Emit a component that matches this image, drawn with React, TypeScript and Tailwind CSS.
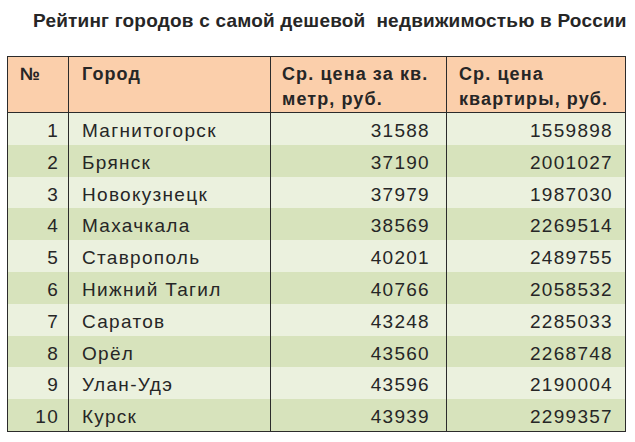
const rows = [
  [1, 'Магнитогорск', '31588', '1559898'],
  [2, 'Брянск', '37190', '2001027'],
  [3, 'Новокузнецк', '37979', '1987030'],
  [4, 'Махачкала', '38569', '2269514'],
  [5, 'Ставрополь', '40201', '2489755'],
  [6, 'Нижний Тагил', '40766', '2058532'],
  [7, 'Саратов', '43248', '2285033'],
  [8, 'Орёл', '43560', '2268748'],
  [9, 'Улан-Удэ', '43596', '2190004'],
  [10, 'Курск', '43939', '2299357'],
];

export default function App() {
  return (
    <div className="w-[635px] h-[442px] bg-white text-[#262626] font-['Liberation_Sans',Arial,sans-serif] overflow-hidden">
      <h1 className="pt-[9px] pl-[33px] text-[19px] leading-[23px] font-bold tracking-[0.2px] whitespace-nowrap">
        Рейтинг городов с самой дешевой&nbsp; недвижимостью в России
      </h1>

      <div className="mt-[24px] ml-[7px] w-[619px] border-[1.5px] border-[#2b2b2b]">
        {/* header */}
        <div className="grid grid-cols-[61px_202px_176px_177px] h-[56px] bg-[#fbcfab] border-b-[1.5px] border-[#2b2b2b] text-[18px] leading-[25px] font-bold tracking-[1.1px]">
          <div className="pl-[12px] pt-[5px] border-r border-[#2b2b2b]">№</div>
          <div className="pl-[13px] pt-[5px] border-r border-[#2b2b2b]">Город</div>
          <div className="pl-[11px] pt-[5px] border-r border-[#2b2b2b]">Ср. цена за кв.<br />метр, руб.</div>
          <div className="pl-[12px] pt-[5px]">Ср. цена<br />квартиры, руб.</div>
        </div>

        {rows.map(([n, city, m, f], i) => (
          <div
            key={n}
            className={`grid grid-cols-[61px_202px_176px_177px] h-[31.8px] text-[19px] leading-[26px] tracking-[1.3px] ${i % 2 === 0 ? 'bg-[#ebf1de]' : 'bg-[#d7e3bc]'}`}
          >
            <div className="pt-[5px] pr-[9px] text-right border-r border-[#2b2b2b]">{n}</div>
            <div className="pt-[5px] pl-[13px] border-r border-[#2b2b2b]">{city}</div>
            <div className="pt-[5px] pr-[16px] text-right border-r border-[#2b2b2b]">{m}</div>
            <div className="pt-[5px] pr-[11px] text-right">{f}</div>
          </div>
        ))}
      </div>
    </div>
  );
}
